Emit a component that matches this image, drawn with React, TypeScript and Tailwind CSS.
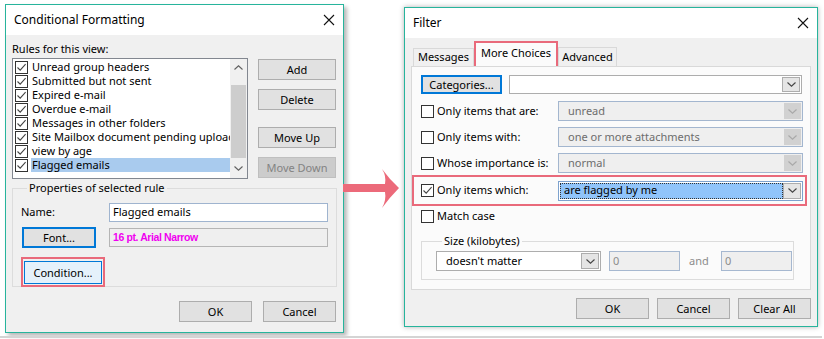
import type { ReactNode } from 'react';

const FONT = { fontFamily: '"Noto Sans", "Segoe UI", sans-serif' };

function CloseX() {
  return (
    <svg width="12" height="12" viewBox="0 0 12 12" className="block">
      <path d="M1 1 L11 11 M11 1 L1 11" stroke="#111" strokeWidth="1.1" fill="none" />
    </svg>
  );
}

function Chevron({ up = false, color = '#555' }: { up?: boolean; color?: string }) {
  return (
    <svg width="9" height="5" viewBox="0 0 9 5" className="block">
      <path
        d={up ? 'M0.5 4.5 L4.5 0.8 L8.5 4.5' : 'M0.5 0.5 L4.5 4.2 L8.5 0.5'}
        stroke={color}
        strokeWidth="1.1"
        fill="none"
      />
    </svg>
  );
}

function CheckBox({ checked = false }: { checked?: boolean }) {
  return (
    <span className="flex h-[13px] w-[13px] shrink-0 items-center justify-center border border-[#333] bg-white">
      {checked && (
        <svg width="11" height="11" viewBox="0 0 11 11" className="block">
          <path d="M1.5 5.5 L4.2 8.2 L9.6 2.2" stroke="#444" strokeWidth="1.1" fill="none" />
        </svg>
      )}
    </span>
  );
}

function Btn({
  children,
  className = '',
  variant = 'normal',
}: {
  children: ReactNode;
  className?: string;
  variant?: 'normal' | 'focus' | 'hover' | 'disabled';
}) {
  const look = {
    normal: 'border border-[#adadad] bg-[#e1e1e1] text-black',
    focus: 'border-2 border-[#0078d7] bg-[#e1e1e1] text-black',
    hover: 'border border-[#0078d7] bg-[#e5f1fb] text-black',
    disabled: 'border border-[#bfbfbf] bg-[#cccccc] text-[#838383]',
  }[variant];
  return (
    <div className={`flex shrink-0 items-center justify-center text-[11px] leading-none ${look} ${className}`}>
      {children}
    </div>
  );
}

function Combo({
  value,
  className = '',
  state = 'normal',
}: {
  value?: string;
  className?: string;
  state?: 'normal' | 'disabled' | 'selected';
}) {
  const box =
    state === 'disabled'
      ? 'border border-[#a3b6cf] bg-[#efefef] text-[#6d6d6d]'
      : state === 'selected'
        ? 'border border-[#7da2ce] bg-white text-black'
        : 'border border-[#adadad] bg-white text-black';
  return (
    <div className={`flex shrink-0 items-stretch p-[1px] text-[11px] ${box} ${className}`}>
      {state === 'selected' ? (
        <div className="flex flex-1 items-center border border-dotted border-[#333] bg-[#90c4fa] pl-[3px]">
          {value}
        </div>
      ) : (
        <div className="flex flex-1 items-center pl-[8px]">{value}</div>
      )}
      {state === 'disabled' ? (
        <div className="flex w-[17px] items-center justify-center bg-[#d1d1d1]">
          <Chevron color="#a8a8a8" />
        </div>
      ) : (
        <div className="flex w-[18px] items-center justify-center border border-[#adadad] bg-[#e5e5e5]">
          <Chevron color="#444" />
        </div>
      )}
    </div>
  );
}

const rules = [
  'Unread group headers',
  'Submitted but not sent',
  'Expired e-mail',
  'Overdue e-mail',
  'Messages in other folders',
  'Site Mailbox document pending upload',
  'view by age',
  'Flagged emails',
];

function ConditionalFormatting() {
  return (
    <div className="absolute left-[5px] top-[4px] flex h-[329px] w-[339px] flex-col border border-[#27b49c] bg-[#f0f0f0] shadow-[3px_3px_4px_rgba(0,0,0,0.28)]">
      <div className="flex h-[30px] items-center justify-between bg-white pl-[8px] pr-[8px]">
        <span className="text-[12px]">Conditional Formatting</span>
        <CloseX />
      </div>

      <div className="flex flex-1 flex-col px-[6px] pt-[7px]">
        <div className="h-[14px] text-[11px] leading-[14px]">Rules for this view:</div>

        <div className="mt-[2px] flex">
          <div className="flex h-[121px] w-[236px] border border-[#828790] bg-white">
            <div className="flex w-[217px] flex-col overflow-hidden pt-[1px]">
              {rules.map((r, i) => (
                <div key={r} className="flex h-[14px] items-center text-[11px] leading-[14px]">
                  <span className="ml-[2px] mr-[3px]">
                    <CheckBox checked />
                  </span>
                  <span
                    className={`flex-1 overflow-hidden whitespace-nowrap pl-[1px] ${i === rules.length - 1 ? 'bg-[#a9cbee]' : ''}`}
                  >
                    {r}
                  </span>
                </div>
              ))}
            </div>
            <div className="flex w-[17px] flex-col bg-[#f0f0f0]">
              <div className="flex h-[17px] items-center justify-center">
                <Chevron up color="#606060" />
              </div>
              <div className="mx-[1px] mt-[9px] h-[73px] bg-[#cdcdcd]" />
              <div className="flex flex-1 items-center justify-center">
                <Chevron color="#606060" />
              </div>
            </div>
          </div>

          <div className="ml-[10px] flex flex-col pt-[1px]">
            <Btn className="h-[21px] w-[78px]">Add</Btn>
            <Btn className="mt-[9px] h-[21px] w-[78px]">Delete</Btn>
            <Btn className="mt-[17px] h-[21px] w-[78px]">Move Up</Btn>
            <Btn className="mt-[9px] h-[21px] w-[78px]" variant="disabled">
              Move Down
            </Btn>
          </div>
        </div>

        <fieldset className="mt-[2px] h-[106px] w-[325px] border border-[#dcdcdc] pl-[8px]">
          <legend className="ml-[6px] px-[2px] text-[11px] leading-[14px]">Properties of selected rule</legend>
          <div className="mt-[8px] flex items-center text-[11px]">
            <span className="w-[88px]">Name:</span>
            <div className="flex h-[19px] w-[219px] items-center border border-[#9fb4cf] bg-white pl-[3px]">
              Flagged emails
            </div>
          </div>
          <div className="mt-[5px] flex items-center text-[11px]">
            <Btn className="ml-[1px] h-[21px] w-[74px]" variant="focus">
              Font...
            </Btn>
            <div className="ml-[13px] flex h-[19px] w-[219px] items-center border border-[#b5b5b5] bg-[#efefef] pl-[3px] text-[10.5px] font-bold tracking-[-0.4px] text-[#f000f0] [font-family:'Liberation_Sans_Narrow','Liberation_Sans',sans-serif]">
              16 pt. Arial Narrow
            </div>
          </div>
          <div className="mt-[9px] flex h-[30px] w-[84px] items-center border-2 border-[#e96a7b] pl-[1px]">
            <Btn className="h-[23px] w-[78px]" variant="hover">
              Condition...
            </Btn>
          </div>
        </fieldset>

        <div className="mt-[14px] flex justify-end gap-[11px] pr-[1px]">
          <Btn className="h-[21px] w-[73px]">OK</Btn>
          <Btn className="h-[21px] w-[73px]">Cancel</Btn>
        </div>
      </div>
    </div>
  );
}

function OptionRow({ label, value, checked = false, state = 'disabled' }: {
  label: string;
  value: string;
  checked?: boolean;
  state?: 'disabled' | 'selected';
}) {
  return (
    <div className="flex h-[20px] items-center text-[11px]">
      <CheckBox checked={checked} />
      <span className="ml-[3px] w-[121px] whitespace-nowrap">{label}</span>
      <Combo value={value} state={state} className="h-[20px] w-[245px]" />
    </div>
  );
}

function Filter() {
  return (
    <div className="absolute left-[404px] top-[7px] flex h-[320px] w-[414px] flex-col border border-[#27b49c] bg-[#f0f0f0] shadow-[0_0_5px_rgba(0,0,0,0.3)]">
      <div className="flex h-[30px] items-center justify-between bg-white pl-[8px] pr-[8px]">
        <span className="text-[12px]">Filter</span>
        <CloseX />
      </div>

      <div className="flex flex-1 flex-col pl-[6px]">
        {/* tab strip */}
        <div className="ml-[2px] mt-[3px] flex h-[25px] items-end text-[11px]">
          <div className="flex h-[18px] w-[61px] items-center justify-center border border-b-0 border-[#d9d9d9] bg-[#f0f0f0]">
            Messages
          </div>
          <div className="flex h-[25px] w-[84px] items-center justify-center border-2 border-b-0 border-[#e96a7b] bg-[#fbfbfb] pb-[2px]">
            More Choices
          </div>
          <div className="flex h-[19px] w-[59px] items-center justify-center border border-b-0 border-[#d9d9d9] bg-[#f0f0f0]">
            Advanced
          </div>
        </div>

        {/* tab panel */}
        <div className="flex h-[224px] w-[400px] flex-col border border-[#d9d9d9] bg-[#fbfbfb] pt-[8px]">
          <div className="flex items-center pl-[9px]">
            <Btn className="h-[19px] w-[81px]" variant="focus">
              Categories...
            </Btn>
            <Combo className="ml-[7px] h-[19px] w-[293px]" />
          </div>

          <div className="mt-[7px] flex flex-col gap-[6px] pl-[9px]">
            <OptionRow label="Only items that are:" value="unread" />
            <OptionRow label="Only items with:" value="one or more attachments" />
            <OptionRow label="Whose importance is:" value="normal" />
          </div>

          <div className="mt-[2px] flex h-[31px] w-[395px] items-center border-2 border-[#e96a7b] pl-[7px]">
            <OptionRow label="Only items which:" value="are flagged by me" checked state="selected" />
          </div>

          <div className="mt-[3px] flex h-[14px] items-center pl-[9px] text-[11px]">
            <CheckBox />
            <span className="ml-[3px]">Match case</span>
          </div>

          <fieldset className="ml-[9px] mt-[11px] h-[46px] w-[373px] border border-[#dcdcdc] pl-[14px] text-[11px]">
            <legend className="ml-[6px] px-[2px] leading-[14px]">Size (kilobytes)</legend>
            <div className="mt-[3px] flex items-center">
              <Combo value="doesn't matter" className="h-[20px] w-[165px]" />
              <div className="ml-[8px] flex h-[20px] w-[71px] items-center border border-[#a6b8d0] bg-[#efefef] pl-[3px] text-[#8c8c8c]">
                0
              </div>
              <span className="ml-[9px] w-[32px] text-[#8c8c8c]">and</span>
              <div className="flex h-[20px] w-[71px] items-center border border-[#a6b8d0] bg-[#efefef] pl-[3px] text-[#8c8c8c]">
                0
              </div>
            </div>
          </fieldset>
        </div>

        <div className="mt-[8px] flex justify-end gap-[8px] pr-[6px]">
          <Btn className="h-[21px] w-[73px]">OK</Btn>
          <Btn className="h-[21px] w-[73px]">Cancel</Btn>
          <Btn className="h-[21px] w-[73px]">Clear All</Btn>
        </div>
      </div>
    </div>
  );
}

function Arrow() {
  return (
    <svg className="absolute left-[343px] top-[166px]" width="58" height="44" viewBox="0 0 58 44">
      <path
        d="M0 18 H42 Q43.5 10 39 3 Q47 14 56 22 Q47 31 39 42 Q43.5 34 42 26 H0 Z"
        fill="#ec6a7a"
      />
    </svg>
  );
}

export default function App() {
  return (
    <div className="relative h-[339px] w-[824px] overflow-hidden bg-white text-black" style={FONT}>
      <ConditionalFormatting />
      <Arrow />
      <Filter />
      <div className="absolute bottom-[1px] left-0 h-[2px] w-[822px] bg-[#d4d4d4]" />
    </div>
  );
}
